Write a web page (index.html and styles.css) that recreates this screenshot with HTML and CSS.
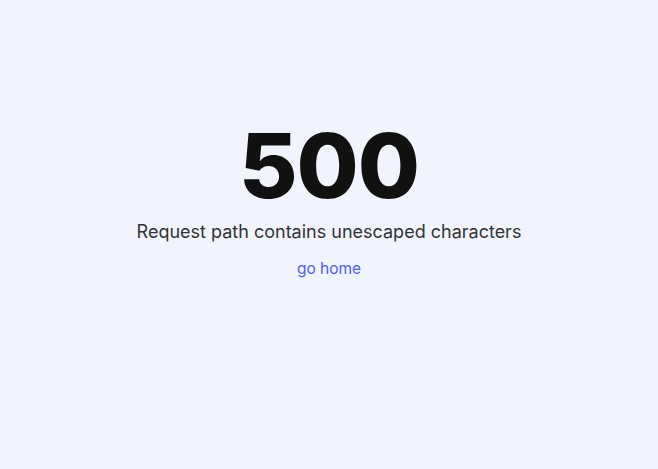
FILE: index.html
```html
<!DOCTYPE html>
<html>
<head>
<meta charset="utf-8">
<link rel="stylesheet" href="styles.css">
</head>
<body>
<main class="page">
  <h1 class="code">500</h1>
  <p class="message">Request path contains unescaped characters</p>
  <a class="home" href="#">go home</a>
</main>
</body>
</html>
```
FILE: styles.css
```css
html, body {
  margin: 0;
  padding: 0;
  height: 100%;
}
body {
  background: #f1f4fd;
  font-family: Inter, "Liberation Sans", sans-serif;
}
.page {
  display: flex;
  flex-direction: column;
  align-items: center;
  padding-top: 112px;
}
.code {
  margin: 0;
  font-size: 90px;
  font-weight: 800;
  line-height: 1.2;
  color: #111;
  letter-spacing: -1px;
}
.message {
  margin: -2px 0 0;
  font-size: 18px;
  line-height: 28px;
  color: #333;
}
.home {
  margin-top: 13px;
  font-size: 15.5px;
  color: #4d5ef6;
  text-decoration: none;
}
```
